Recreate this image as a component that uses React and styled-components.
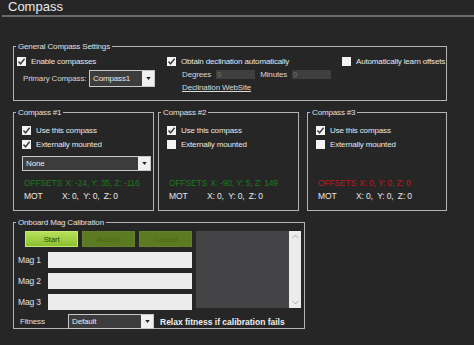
import styled, { createGlobalStyle } from "styled-components";

const Global = createGlobalStyle`
  html, body {
    margin: 0;
    background: #262627;
  }
  body {
    font-family: "Liberation Sans", Arial, sans-serif;
    font-size: 8px;
    letter-spacing: -0.15px;
    color: #e8e8e8;
  }
`;

export default function App() {
  return (
    <>
      <Global />
      <Page>
        <Header>Compass</Header>
        <Content>
          <Group $w={434} $h={55}>
            <Legend>General Compass Settings</Legend>
            <GeneralGrid>
              <Col>
                <Check checked label="Enable compasses" />
                <PrimaryRow>
                  <PrimaryLabel>Primary Compass:</PrimaryLabel>
                  <Combo $w={66} $h={17}>
                    <ComboText>Compass1</ComboText>
                    <Arrow />
                  </Combo>
                </PrimaryRow>
              </Col>
              <Col>
                <Check checked label="Obtain declination automatically" />
                <DegRow>
                  <span>Degrees</span>
                  <NumBox>0</NumBox>
                  <span>Minutes</span>
                  <NumBox>0</NumBox>
                </DegRow>
                <Link>Declination WebSite</Link>
              </Col>
              <Col>
                <Check label="Automatically learn offsets" />
              </Col>
            </GeneralGrid>
          </Group>

          <CompassRow>
            <CompassBox
              title="Compass #1"
              w={141}
              external
              combo
              offsets="X: -24,  Y: 35,  Z: -116"
            />
            <CompassBox
              title="Compass #2"
              w={141}
              offsets="X: -90,  Y: 5,  Z: 149"
            />
            <CompassBox
              title="Compass #3"
              w={140}
              bad
              offsets="X: 0,  Y: 0,  Z: 0"
            />
          </CompassRow>

          <Group $w={292} $h={107}>
            <Legend>Onboard Mag Calibration</Legend>
            <CalGrid>
              <CalLeft>
                <Buttons>
                  <CalButton $active>Start</CalButton>
                  <CalButton>Accept</CalButton>
                  <CalButton>Cancel</CalButton>
                </Buttons>
                {["Mag 1", "Mag 2", "Mag 3"].map((m) => (
                  <MagRow key={m}>
                    <MagLabel>{m}</MagLabel>
                    <MagBox />
                  </MagRow>
                ))}
              </CalLeft>
              <Log>
                <ScrollBar>
                  <ScrollArrow viewBox="0 0 8 5">
                    <path d="M1 4 L4 1 L7 4" />
                  </ScrollArrow>
                  <ScrollArrow viewBox="0 0 8 5">
                    <path d="M1 1 L4 4 L7 1" />
                  </ScrollArrow>
                </ScrollBar>
              </Log>
            </CalGrid>
            <FitRow>
              <FitLabel>Fitness</FitLabel>
              <Combo $w={86} $h={15}>
                <ComboText>Default</ComboText>
                <Arrow />
              </Combo>
              <Bold>Relax fitness if calibration fails</Bold>
            </FitRow>
          </Group>
        </Content>
      </Page>
    </>
  );
}

function Check({ checked, label }) {
  return (
    <CheckRow>
      <Box>
        {checked && (
          <svg viewBox="0 0 9 9" width="9" height="9">
            <path d="M1.5 4.5 L3.6 6.8 L7.6 1.8" fill="none" stroke="#3a3a3a" strokeWidth="1.4" />
          </svg>
        )}
      </Box>
      <span>{label}</span>
    </CheckRow>
  );
}

function Arrow() {
  return (
    <ArrowPart>
      <svg viewBox="0 0 6 4" width="5" height="3">
        <path d="M0 0 H6 L3 4 Z" fill="#222" />
      </svg>
    </ArrowPart>
  );
}

function CompassBox({ title, w, external, combo, offsets, bad }) {
  return (
    <Group $w={w} $h={99}>
      <Legend>{title}</Legend>
      <CompassBody>
        <Checks>
          <Check checked label="Use this compass" />
          <Check checked={external} label="Externally mounted" />
        </Checks>
        <ComboSlot>
          {combo && (
            <Combo $w={129} $h={15}>
              <ComboText>None</ComboText>
              <Arrow />
            </Combo>
          )}
        </ComboSlot>
        <Offsets $bad={bad}>
          <span>OFFSETS</span>
          <span>{offsets}</span>
        </Offsets>
        <Mot>
          <span>MOT</span>
          <span>X: 0,&nbsp;&nbsp;Y: 0,&nbsp;&nbsp;Z: 0</span>
        </Mot>
      </CompassBody>
    </Group>
  );
}

const Page = styled.div`
  width: 474px;
  height: 345px;
  overflow: hidden;
`;

const Header = styled.div`
  font-size: 13px;
  letter-spacing: 0;
  color: #ececec;
  line-height: 14px;
  padding: 0 0 1px 6px;
  margin-left: 2px;
  border-bottom: 2px solid #6b6b6b;
`;

const Content = styled.div`
  padding: 29px 0 0 13px;
  display: flex;
  flex-direction: column;
  gap: 11px;
`;

const Group = styled.fieldset`
  box-sizing: border-box;
  width: ${(p) => p.$w}px;
  height: ${(p) => p.$h}px;
  margin: 0;
  padding: 0;
  border: 1px solid #b4b4b4;
  min-width: 0;
  position: relative;
`;

const Legend = styled.legend`
  position: absolute;
  top: -6px;
  left: 2px;
  padding: 0 2px;
  background: #262627;
  line-height: 11px;
  color: #e0e0e0;
  white-space: nowrap;
`;

const GeneralGrid = styled.div`
  display: grid;
  grid-template-columns: 150px 175px 1fr;
  padding: 9px 0 0 3px;
`;

const Col = styled.div`
  display: flex;
  flex-direction: column;
`;

const CheckRow = styled.label`
  display: flex;
  align-items: center;
  gap: 5px;
  height: 11px;
  white-space: nowrap;
`;

const Box = styled.span`
  width: 9px;
  height: 9px;
  background: #f4f4f4;
  display: flex;
  flex-shrink: 0;
`;

const PrimaryRow = styled.div`
  display: flex;
  align-items: center;
  margin: 3px 0 0 6px;
  color: #d8d8d8;
  white-space: nowrap;
`;

const PrimaryLabel = styled.span`
  width: 66px;
`;

const Combo = styled.div`
  box-sizing: border-box;
  width: ${(p) => p.$w}px;
  height: ${(p) => p.$h}px;
  border: 1px solid #c8c8c8;
  background: #3c3c3d;
  display: flex;
  align-items: stretch;
  flex-shrink: 0;
`;

const ComboText = styled.span`
  flex: 1;
  display: flex;
  align-items: center;
  padding-left: 3px;
  color: #eaeaea;
`;

const ArrowPart = styled.span`
  width: 12px;
  background: #f0f0f0;
  display: flex;
  align-items: center;
  justify-content: center;
`;

const DegRow = styled.div`
  display: flex;
  align-items: center;
  gap: 5px;
  margin: 3px 0 0 15px;
  color: #d8d8d8;
  white-space: nowrap;
`;

const NumBox = styled.div`
  width: 38px;
  height: 9px;
  background: #3f3f40;
  color: #777;
  font-size: 7px;
  line-height: 9px;
  padding-left: 1px;
`;

const Link = styled.a`
  margin: 4px 0 0 15px;
  color: #dcdcdc;
  text-decoration: underline;
`;

const CompassRow = styled.div`
  display: flex;
  gap: 4px;
  & > :last-child {
    margin-left: 4px;
  }
`;

const CompassBody = styled.div`
  display: flex;
  flex-direction: column;
  padding: 12px 0 0 8px;
`;

const Checks = styled.div`
  display: flex;
  flex-direction: column;
  gap: 3px;
`;

const ComboSlot = styled.div`
  height: 15px;
  margin-top: 6px;
`;

const Offsets = styled.div`
  display: flex;
  gap: 3px;
  margin: 7px 0 0 2px;
  font-size: 8.5px;
  color: ${(p) => (p.$bad ? "#c0181a" : "#1c7a1c")};
`;

const Mot = styled.div`
  display: flex;
  margin: 3px 0 0 2px;
  font-size: 8.5px;
  color: #e8e8e8;
  span:first-child {
    width: 38px;
  }
`;

const CalGrid = styled.div`
  display: grid;
  grid-template-columns: 178px 105px;
  padding: 8px 0 0 4px;
`;

const CalLeft = styled.div`
  display: flex;
  flex-direction: column;
  gap: 4px;
`;

const Buttons = styled.div`
  display: flex;
  gap: 4px;
  padding-left: 7px;
`;

const CalButton = styled.div`
  width: 53px;
  height: 16px;
  display: flex;
  align-items: center;
  justify-content: center;
  background: ${(p) =>
    p.$active ? "linear-gradient(#b6e05a, #8cc030)" : "#5b7a22"};
  color: ${(p) => (p.$active ? "#2f4d0c" : "#4d6a18")};
  border: 1px solid ${(p) => (p.$active ? "#c6e87a" : "#61812a")};
  box-sizing: border-box;
`;

const MagRow = styled.div`
  display: flex;
  align-items: center;
  height: 17px;
`;

const MagLabel = styled.span`
  width: 30px;
  font-size: 8.5px;
  color: #e0e0e0;
`;

const MagBox = styled.div`
  width: 144px;
  height: 16px;
  background: #ececec;
`;

const Log = styled.div`
  background: #444446;
  height: 77px;
  display: flex;
  justify-content: flex-end;
`;

const ScrollBar = styled.div`
  width: 12px;
  background: #ececec;
  display: flex;
  flex-direction: column;
  justify-content: space-between;
  align-items: center;
  padding: 3px 0;
`;

const ScrollArrow = styled.svg`
  width: 7px;
  height: 5px;
  fill: none;
  stroke: #9a9a9a;
  stroke-width: 1;
`;

const FitRow = styled.div`
  display: flex;
  align-items: center;
  margin: 4px 0 0 6px;
`;

const FitLabel = styled.span`
  width: 48px;
  color: #e0e0e0;
`;

const Bold = styled.span`
  font-weight: bold;
  font-size: 8.5px;
  letter-spacing: 0;
  margin-left: 6px;
  color: #f0f0f0;
  white-space: nowrap;
`;
